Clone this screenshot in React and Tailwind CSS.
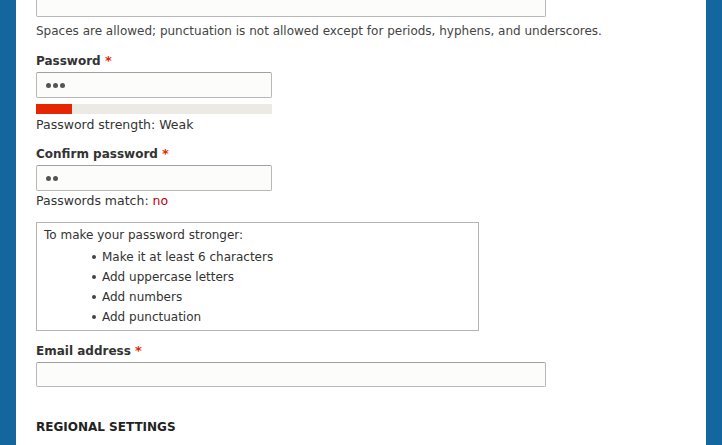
import React from "react";

const font = { fontFamily: '"DejaVu Sans", "Lucida Grande", sans-serif' };

function Label({ children }) {
  return (
    <div className="pt-[1px] text-[12px] leading-[18px] font-bold text-[#333]">
      {children} <span className="text-[#e62600] text-[13px]">*</span>
    </div>
  );
}

function Dots({ n }) {
  return (
    <div className="flex gap-[2px] pl-[9px] items-center h-full">
      {Array.from({ length: n }).map((_, i) => (
        <span key={i} className="w-[5px] h-[5px] rounded-full bg-[#555]" />
      ))}
    </div>
  );
}

export default function App() {
  const items = [
    "Make it at least 6 characters",
    "Add uppercase letters",
    "Add numbers",
    "Add punctuation",
  ];
  return (
    <div className="flex w-[722px] h-[445px] overflow-hidden bg-[#13669e]" style={font}>
      <div className="w-[16px] shrink-0" />
      <div className="flex-1 bg-white pl-[20px] flex flex-col text-[#333]">
        <div className="-mt-[9px] h-[26px] w-[510px] border border-[#b8b8b8] border-t-[#a0a0a0] rounded-[2px] bg-[#fcfcfa] shrink-0" />
        <div className="mt-[5px] text-[12px] leading-[18px] text-[#444] whitespace-nowrap">
          Spaces are allowed; punctuation is not allowed except for periods, hyphens, and underscores.
        </div>
        <div className="mt-[11px]">
          <Label>Password</Label>
        </div>
        <div className="mt-[2px] h-[26px] w-[236px] border border-[#b8b8b8] border-t-[#a0a0a0] rounded-[2px] bg-[#fcfcfa] shrink-0">
          <Dots n={3} />
        </div>
        <div className="mt-[6px] h-[10px] w-[236px] bg-[#ebeae4] flex shrink-0">
          <div className="w-[36px] h-full bg-[#e62600]" />
        </div>
        <div className="mt-[2px] text-[12.5px] leading-[18px]">Password strength: Weak</div>
        <div className="mt-[10px]">
          <Label>Confirm password</Label>
        </div>
        <div className="mt-[2px] h-[26px] w-[236px] border border-[#b8b8b8] border-t-[#a0a0a0] rounded-[2px] bg-[#fcfcfa] shrink-0">
          <Dots n={2} />
        </div>
        <div className="pt-[1px] text-[12.5px] leading-[18px]">
          Passwords match: <span className="text-[#c00000]">no</span>
        </div>
        <div className="mt-[12px] w-[443px] h-[109px] border border-[#b4b4b4] pt-[3px] pl-[7px] shrink-0">
          <div className="text-[12px] leading-[18px]">To make your password stronger:</div>
          <div className="mt-[3px] pl-[48px] flex flex-col">
            {items.map((t) => (
              <div key={t} className="flex items-center h-[20px] text-[12px]">
                <span className="w-[4px] h-[4px] rounded-full bg-[#444] mr-[6px]" />
                {t}
              </div>
            ))}
          </div>
        </div>
        <div className="mt-[10px]">
          <Label>Email address</Label>
        </div>
        <div className="mt-[2px] h-[25px] w-[510px] border border-[#b8b8b8] border-t-[#a0a0a0] rounded-[2px] bg-[#fcfcfa] shrink-0" />
        <div className="mt-[31px] text-[12px] leading-[18px] font-bold uppercase text-[#222]">
          Regional settings
        </div>
      </div>
      <div className="w-[16px] shrink-0" />
    </div>
  );
}
